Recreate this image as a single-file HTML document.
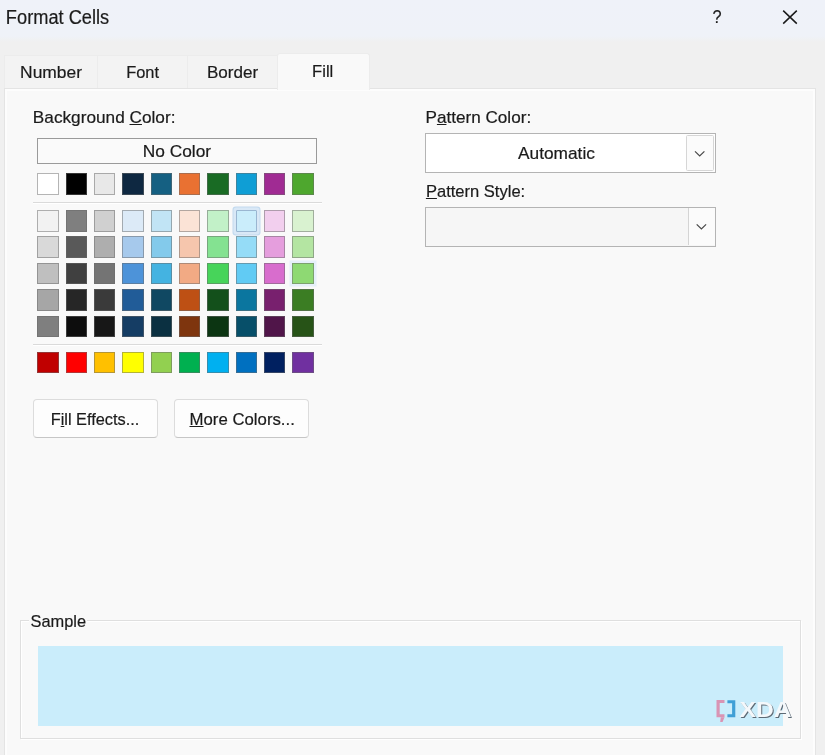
<!DOCTYPE html>
<html><head><meta charset="utf-8"><title>Format Cells</title>
<style>
html,body{margin:0;padding:0;}
body{width:825px;height:755px;overflow:hidden;position:relative;background:#f0f0f0;font-family:"Liberation Sans",sans-serif;color:#1b1b1b;font-size:17px;}
#root{position:absolute;left:0;top:0;width:825px;height:755px;will-change:transform;}
.abs{position:absolute;}
.t{position:absolute;white-space:nowrap;line-height:20px;transform-origin:0 0;display:block;-webkit-text-stroke:0.2px #1b1b1b;}
.titlebar{left:0;top:0;width:825px;height:54px;background:linear-gradient(#eff2f9 0,#eff2f8 36px,#f0f0f0 42px,#f0f0f0 54px);}
.tab{top:54.5px;height:33.5px;background:#f3f3f3;border:1px solid #ececec;border-bottom:none;box-sizing:border-box;}
.tab.active{top:53px;height:37px;background:#f9f9f9;border-color:#ececec;border-radius:3px 3px 0 0;}
.panel{left:4px;top:87.5px;width:811.5px;height:680px;background:#f9f9f9;border:1px solid #e4e4e4;box-sizing:border-box;box-shadow:inset 0 0 0 2px #fdfdfd;}
u{text-decoration:underline;text-underline-offset:0.8px;text-decoration-thickness:1px;}
.sw{position:absolute;width:21.6px;height:21.6px;box-sizing:border-box;border:1px solid rgba(105,105,105,.5);}
.sw.sel{border:1px solid #9ab6d1;box-shadow:0 0 0 2.5px #d9e8f6,0 0 0 3.5px #c3daef;border-radius:1px;}
.sw.hov{box-shadow:0 0 0 2.5px #e6f0fa;}
.nocolor{left:37px;top:138px;width:280px;height:26px;box-sizing:border-box;border:1px solid #9a9a9a;background:#fafafa;}
.sep{left:33px;width:289px;height:1px;background:#dadada;box-shadow:0 1px 0 #fff;}
.btn{top:399px;height:38.5px;box-sizing:border-box;border:1px solid #dcdcdc;border-bottom-color:#c6c6c6;border-radius:4px;background:#fdfdfd;}
.dd{left:425px;width:291px;height:39.5px;box-sizing:border-box;border:1px solid #b4b4b4;}
.ddbtn{position:absolute;right:1px;top:0.5px;width:28.5px;height:36.5px;box-sizing:border-box;background:#fbfbfb;border:1px solid #d6d6d6;border-radius:1.5px;}
.ddbtn2{position:absolute;right:0;top:0;width:27px;height:37px;box-sizing:border-box;background:#fbfbfb;border-left:1px solid #d4d4d4;}
.fs{left:20px;top:620px;width:781px;height:119px;box-sizing:border-box;border:1px solid #dfdfdf;box-shadow:1px 1px 0 #fff, inset 1px 1px 0 #fff;}
</style></head><body><div id="root">
<div class="abs titlebar"></div>
<span class="t" id="title" style="left:5px;top:7px;font-size:19.5px;transform:translateX(0.87px) scaleX(0.9345)">Format Cells</span>
<span class="t" id="q" style="left:712px;top:7px;font-size:19px;transform:translateX(0.60px) scaleX(0.8600)">?</span>
<svg class="abs" style="left:781px;top:9px" width="18" height="16" viewBox="0 0 18 16"><path d="M2.2 1.6 L15.8 14.6 M15.8 1.6 L2.2 14.6" stroke="#1a1a1a" stroke-width="1.5" fill="none"/></svg>

<div class="abs panel"></div>
<div class="abs tab" style="left:4px;width:94px;"></div>
<div class="abs tab" style="left:97px;width:91px;"></div>
<div class="abs tab" style="left:187px;width:91px;"></div>
<div class="abs tab active" style="left:276.5px;width:93px;"></div>
<span class="t" id="tnum" style="left:20px;top:63px;font-size:17px;transform:translateX(0.04px) scaleX(1.0254)">Number</span><span class="t" id="tfont" style="left:126px;top:63px;font-size:17px;transform:translateX(0.17px) scaleX(0.9655)">Font</span><span class="t" id="tbord" style="left:206px;top:63px;font-size:17px;transform:translateX(0.89px) scaleX(1.0036)">Border</span><span class="t" id="tfill" style="left:312px;top:62px;font-size:17px;transform:translateX(0.09px) scaleX(0.9735)">Fill</span>

<span class="t" id="bg" style="left:32px;top:108px;font-size:17px;transform:translateX(0.82px) scaleX(1.0129)">Background <u>C</u>olor:</span>
<div class="abs nocolor"></div>
<span class="t" id="nocol" style="left:142px;top:142px;font-size:17px;transform:translateX(0.69px) scaleX(1.0189)">No Color</span>
<div class="abs sep" style="top:201.6px;"></div>
<div class="abs sep" style="top:343.5px;"></div>
<div class="sw " style="left:37.2px;top:173.2px;background:#FFFFFF"></div>
<div class="sw " style="left:65.5px;top:173.2px;background:#000000"></div>
<div class="sw " style="left:93.9px;top:173.2px;background:#E8E8E8"></div>
<div class="sw " style="left:122.2px;top:173.2px;background:#0E2841"></div>
<div class="sw " style="left:150.5px;top:173.2px;background:#156082"></div>
<div class="sw " style="left:178.8px;top:173.2px;background:#E97132"></div>
<div class="sw " style="left:207.2px;top:173.2px;background:#196B24"></div>
<div class="sw " style="left:235.5px;top:173.2px;background:#0F9ED5"></div>
<div class="sw " style="left:263.8px;top:173.2px;background:#A02B93"></div>
<div class="sw " style="left:292.2px;top:173.2px;background:#4EA72E"></div>
<div class="sw " style="left:37.2px;top:210.0px;background:#F2F2F2"></div>
<div class="sw " style="left:65.5px;top:210.0px;background:#7F7F7F"></div>
<div class="sw " style="left:93.9px;top:210.0px;background:#D0D0D0"></div>
<div class="sw " style="left:122.2px;top:210.0px;background:#DCEAF7"></div>
<div class="sw " style="left:150.5px;top:210.0px;background:#C1E4F5"></div>
<div class="sw " style="left:178.8px;top:210.0px;background:#FBE3D6"></div>
<div class="sw " style="left:207.2px;top:210.0px;background:#C2F1C8"></div>
<div class="sw sel" style="left:235.5px;top:210.0px;background:#CAEDFB"></div>
<div class="sw " style="left:263.8px;top:210.0px;background:#F2CFEE"></div>
<div class="sw " style="left:292.2px;top:210.0px;background:#D9F2D0"></div>
<div class="sw " style="left:37.2px;top:236.4px;background:#D9D9D9"></div>
<div class="sw " style="left:65.5px;top:236.4px;background:#595959"></div>
<div class="sw " style="left:93.9px;top:236.4px;background:#AEAEAE"></div>
<div class="sw " style="left:122.2px;top:236.4px;background:#A6C9EC"></div>
<div class="sw " style="left:150.5px;top:236.4px;background:#83CAEB"></div>
<div class="sw " style="left:178.8px;top:236.4px;background:#F6C6AD"></div>
<div class="sw " style="left:207.2px;top:236.4px;background:#84E291"></div>
<div class="sw " style="left:235.5px;top:236.4px;background:#95DCF7"></div>
<div class="sw " style="left:263.8px;top:236.4px;background:#E59EDD"></div>
<div class="sw " style="left:292.2px;top:236.4px;background:#B4E5A2"></div>
<div class="sw " style="left:37.2px;top:262.8px;background:#BFBFBF"></div>
<div class="sw " style="left:65.5px;top:262.8px;background:#404040"></div>
<div class="sw " style="left:93.9px;top:262.8px;background:#747474"></div>
<div class="sw " style="left:122.2px;top:262.8px;background:#4D93D9"></div>
<div class="sw " style="left:150.5px;top:262.8px;background:#44B3E1"></div>
<div class="sw " style="left:178.8px;top:262.8px;background:#F2AA84"></div>
<div class="sw " style="left:207.2px;top:262.8px;background:#47D45A"></div>
<div class="sw " style="left:235.5px;top:262.8px;background:#61CBF4"></div>
<div class="sw " style="left:263.8px;top:262.8px;background:#D86DCD"></div>
<div class="sw hov" style="left:292.2px;top:262.8px;background:#8ED973"></div>
<div class="sw " style="left:37.2px;top:289.3px;background:#A6A6A6"></div>
<div class="sw " style="left:65.5px;top:289.3px;background:#262626"></div>
<div class="sw " style="left:93.9px;top:289.3px;background:#3A3A3A"></div>
<div class="sw " style="left:122.2px;top:289.3px;background:#215C98"></div>
<div class="sw " style="left:150.5px;top:289.3px;background:#104862"></div>
<div class="sw " style="left:178.8px;top:289.3px;background:#BE5014"></div>
<div class="sw " style="left:207.2px;top:289.3px;background:#13501B"></div>
<div class="sw " style="left:235.5px;top:289.3px;background:#0B769F"></div>
<div class="sw " style="left:263.8px;top:289.3px;background:#78206E"></div>
<div class="sw " style="left:292.2px;top:289.3px;background:#3B7D23"></div>
<div class="sw " style="left:37.2px;top:315.7px;background:#7F7F7F"></div>
<div class="sw " style="left:65.5px;top:315.7px;background:#0D0D0D"></div>
<div class="sw " style="left:93.9px;top:315.7px;background:#171717"></div>
<div class="sw " style="left:122.2px;top:315.7px;background:#153D64"></div>
<div class="sw " style="left:150.5px;top:315.7px;background:#0B3041"></div>
<div class="sw " style="left:178.8px;top:315.7px;background:#7E350E"></div>
<div class="sw " style="left:207.2px;top:315.7px;background:#0C3512"></div>
<div class="sw " style="left:235.5px;top:315.7px;background:#074F69"></div>
<div class="sw " style="left:263.8px;top:315.7px;background:#501549"></div>
<div class="sw " style="left:292.2px;top:315.7px;background:#275317"></div>
<div class="sw " style="left:37.2px;top:351.8px;background:#C00000"></div>
<div class="sw " style="left:65.5px;top:351.8px;background:#FF0000"></div>
<div class="sw " style="left:93.9px;top:351.8px;background:#FFC000"></div>
<div class="sw " style="left:122.2px;top:351.8px;background:#FFFF00"></div>
<div class="sw " style="left:150.5px;top:351.8px;background:#92D050"></div>
<div class="sw " style="left:178.8px;top:351.8px;background:#00B050"></div>
<div class="sw " style="left:207.2px;top:351.8px;background:#00B0F0"></div>
<div class="sw " style="left:235.5px;top:351.8px;background:#0070C0"></div>
<div class="sw " style="left:263.8px;top:351.8px;background:#002060"></div>
<div class="sw " style="left:292.2px;top:351.8px;background:#7030A0"></div>
<div class="abs btn" style="left:33px;width:125px;"></div>
<div class="abs btn" style="left:174px;width:135px;"></div>
<span class="t" id="fe" style="left:50px;top:410px;font-size:17px;transform:translateX(0.67px) scaleX(0.9611)">F<u>i</u>ll Effects...</span><span class="t" id="mc" style="left:189px;top:410px;font-size:17px;transform:translateX(0.50px) scaleX(0.9867)"><u>M</u>ore Colors...</span>

<span class="t" id="pc" style="left:425px;top:108px;font-size:17px;transform:translateX(0.47px) scaleX(1.0074)">P<u>a</u>ttern Color:</span>
<div class="abs dd" style="top:133px;background:#fff;"><div class="ddbtn"><svg width="26" height="34" viewBox="0 0 26 34" style="position:absolute;left:0;top:0"><path d="M8.0 15.3 L12.7 20.0 L17.4 15.3" stroke="#484848" stroke-width="1.2" fill="none"/></svg></div></div>
<span class="t" id="auto" style="left:518px;top:144px;font-size:17px;transform:translateX(0.05px) scaleX(1.0164)">Automatic</span>
<span class="t" id="ps" style="left:425px;top:182px;font-size:17px;transform:translateX(0.90px) scaleX(0.9731)"><u>P</u>attern Style:</span>
<div class="abs dd" style="top:207px;height:39.5px;background:#f6f6f6;"><div class="ddbtn2"><svg width="26" height="37" viewBox="0 0 26 37" style="position:absolute;left:0;top:0"><path d="M7.7 16.3 L12.4 21.0 L17.1 16.3" stroke="#484848" stroke-width="1.2" fill="none"/></svg></div></div>

<div class="abs fs"></div>
<div class="abs" style="left:29px;top:612px;width:58px;height:18px;background:#f9f9f9;"></div>
<span class="t" id="sample" style="left:30px;top:612px;font-size:17px;transform:translateX(0.47px) scaleX(0.9635)">Sample</span>
<div class="abs" style="left:37.5px;top:645.6px;width:745.3px;height:80.9px;background:#caedfb;"></div>

<div class="abs" style="left:712px;top:696px;width:84px;height:30px;">
<svg width="84" height="30" viewBox="0 0 84 30" style="position:absolute;left:0;top:0">
<path d="M4.5 4 H12.5 V7 H7.7 V18.3 H12.5 V21.3 H4.5 Z" fill="#d994b4"/>
<path d="M8.8 21.3 H12.5 L10.6 26 H8.2 Z" fill="#d994b4"/>
<path d="M15.4 4.3 H23.3 V21.3 H15.4 V18.3 H20.1 V7.3 H15.4 Z" fill="#3f9fd6"/>
<text x="27.5" y="20.6" font-family="Liberation Sans, sans-serif" font-weight="bold" font-size="21.5" fill="#f4f8fb" textLength="52" lengthAdjust="spacingAndGlyphs" style="filter:drop-shadow(1px 1px 0.4px #5d6a75)">XDA</text>
</svg></div>
</div></body></html>
